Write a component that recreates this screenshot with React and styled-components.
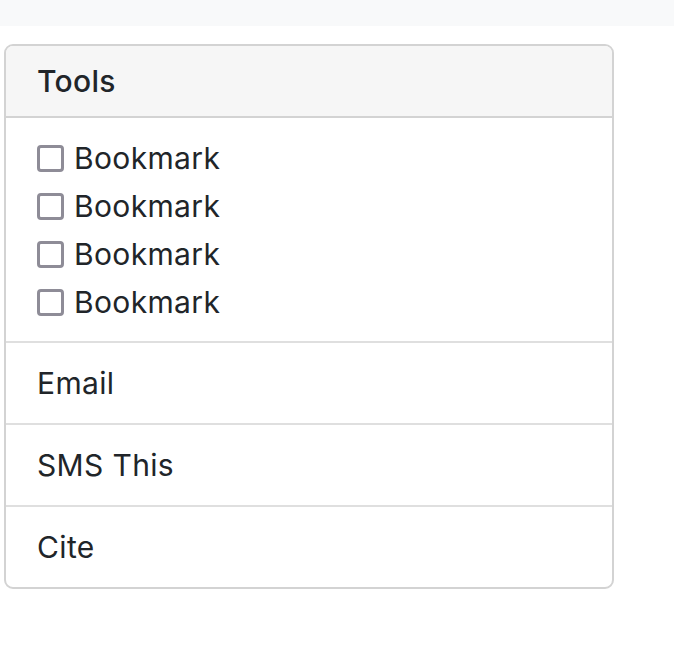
import React from "react";
import styled, { createGlobalStyle } from "styled-components";

const Global = createGlobalStyle`
  html, body { margin: 0; padding: 0; background: #ffffff; }
  body { font-family: Inter, "Noto Sans", sans-serif; color: #212529; }
`;

const TopBar = styled.div`
  height: 26px;
  background: #f8f9fa;
`;

const Page = styled.div`
  padding: 18px 0 0 4px;
`;

const Card = styled.div`
  width: 610px;
  box-sizing: border-box;
  border: 2px solid #d3d3d3;
  border-radius: 9px;
  overflow: hidden;
  background: #fff;
`;

const Header = styled.div`
  height: 72px;
  box-sizing: border-box;
  display: flex;
  align-items: center;
  padding: 0 31px;
  background: #f6f6f6;
  border-bottom: 2px solid #d3d3d3;
  font-size: 30px;
  font-weight: 500;
  letter-spacing: 0.3px;
`;

const Section = styled.div`
  padding: ${(p) => p.$pad || "0 31px"};
  border-top: ${(p) => (p.$first ? "none" : "2px solid #dfdfdf")};
  font-size: 30px;
  letter-spacing: 0.35px;
`;

const CheckList = styled.div`
  display: flex;
  flex-direction: column;
`;

const CheckRow = styled.label`
  display: flex;
  align-items: center;
  gap: 10px;
  height: 48px;
`;

const Box = styled.span`
  width: 21px;
  height: 21px;
  border: 3px solid #8e8c97;
  border-radius: 4px;
  background: #fff;
  flex: none;
`;

const Item = styled.div`
  height: 80px;
  display: flex;
  align-items: center;
`;

export default function App() {
  return (
    <>
      <Global />
      <TopBar />
      <Page>
        <Card>
          <Header>Tools</Header>
          <Section $first $pad="16px 31px 15px">
            <CheckList>
              {[0, 1, 2, 3].map((i) => (
                <CheckRow key={i}>
                  <Box />
                  Bookmark
                </CheckRow>
              ))}
            </CheckList>
          </Section>
          <Section>
            <Item>Email</Item>
          </Section>
          <Section>
            <Item>SMS This</Item>
          </Section>
          <Section>
            <Item>Cite</Item>
          </Section>
        </Card>
      </Page>
    </>
  );
}
